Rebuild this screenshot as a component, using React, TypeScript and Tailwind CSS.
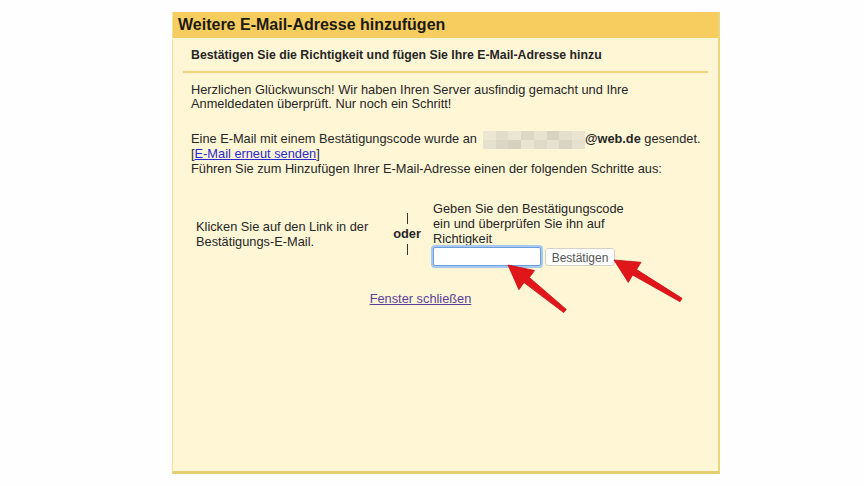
const mosaic = [
  'bg-[#ece6d3]', 'bg-[#e2dccb]', 'bg-[#ebe5d2]', 'bg-[#ddd7c6]', 'bg-[#e8e2cf]', 'bg-[#d8d2c1]', 'bg-[#e4decc]', 'bg-[#eae4d1]',
  'bg-[#e6e0ce]', 'bg-[#dcd6c4]', 'bg-[#d6d0bf]', 'bg-[#e9e3d0]', 'bg-[#dfd9c8]', 'bg-[#e7e1cf]', 'bg-[#d9d3c2]', 'bg-[#e5dfcd]',
];

const Arrows = () => (
  <svg className="pointer-events-none absolute inset-0" width="864" height="486" viewBox="0 0 864 486">
    <g fill="#e0161b" stroke="#c80e12" strokeWidth="0.8" strokeLinejoin="round">
      <polygon points="508,265 534.5,270.5 529.4,277.6 566.3,309.4 563.7,312.6 524,282.6 518.9,289.7" />
      <polygon points="614,260 641,262.3 636.6,269.6 682,298.3 680,301.7 632.6,275 628.3,282.4" />
    </g>
  </svg>
);

export default function App() {
  return (
    <div className="relative h-[486px] w-[864px] overflow-hidden bg-[#fefefe] font-['Liberation_Sans',Arial,sans-serif] text-[#262626]">
      <div className="ml-[172px] mt-[12px] flex h-[462px] w-[548px] flex-col border-l border-r-2 border-b-[3px] border-l-[#f3e29a] border-r-[#ead77c] border-b-[#e3cf72] bg-[#fff6d6]">
        <div className="flex h-[26px] items-center bg-[#f7cd5f] pl-[5px] text-[16px] font-bold text-[#1c1a14]">
          Weitere E-Mail-Adresse hinzufügen
        </div>

        <div className="mx-[10px]">
          <div className="border-b-2 border-[#f2d27a] pb-[9px] pl-[8px] pt-[10px] text-[12.3px] font-bold leading-[14px]">
            Bestätigen Sie die Richtigkeit und fügen Sie Ihre E-Mail-Adresse hinzu
          </div>

          <div className="pl-[8px] text-[12.8px]">
            <p className="mt-[10px] leading-[14px]">
              Herzlichen Glückwunsch! Wir haben Ihren Server ausfindig gemacht und Ihre
              <br />
              Anmeldedaten überprüft. Nur noch ein Schritt!
            </p>

            <p className="mt-[20px] leading-[15px]">
              Eine E-Mail mit einem Bestätigungscode wurde an
              <span className="-my-[4px] ml-[6px] inline-grid h-[18px] w-[102px] grid-cols-8 grid-rows-2 align-middle">
                {mosaic.map((c, i) => (
                  <span key={i} className={c} />
                ))}
              </span>
              <b>@web.de</b> gesendet.
              <br />[<a className="text-[#2a2ad0] underline">E-Mail erneut senden</a>]
              <br />
              Führen Sie zum Hinzufügen Ihrer E-Mail-Adresse einen der folgenden Schritte aus:
            </p>

            <div className="ml-[5px] mt-[25px] w-[449px]">
              <div className="flex items-center">
                <div className="w-[193px] leading-[15px]">
                  Klicken Sie auf den Link in der
                  <br />
                  Bestätigungs-E-Mail.
                </div>
                <div className="flex w-[36px] flex-col items-center">
                  <div className="h-[11px] w-px bg-[#333]" />
                  <div className="my-[3px] font-bold leading-[14px]">oder</div>
                  <div className="h-[11px] w-px bg-[#333]" />
                </div>
                <div className="ml-[8px]">
                  <div className="leading-[15px]">
                    Geben Sie den Bestätigungscode
                    <br />
                    ein und überprüfen Sie ihn auf
                    <br />
                    Richtigkeit
                  </div>
                  <div className="mt-[1px] flex items-center gap-[4px]">
                    <input className="h-[19px] w-[108px] rounded-[2px] border border-[#6c9fe0] bg-white shadow-[0_0_0_2px_#a9c8f0] outline-none" />
                    <button className="h-[18px] w-[70px] rounded-[3px] border border-[#d6d2c8] bg-white text-[12px] text-[#555]">
                      Bestätigen
                    </button>
                  </div>
                </div>
              </div>

              <div className="mt-[26px] text-center leading-[14px]">
                <a className="text-[#5b3f9c] underline">Fenster schließen</a>
              </div>
            </div>
          </div>
        </div>
      </div>
      <Arrows />
    </div>
  );
}
